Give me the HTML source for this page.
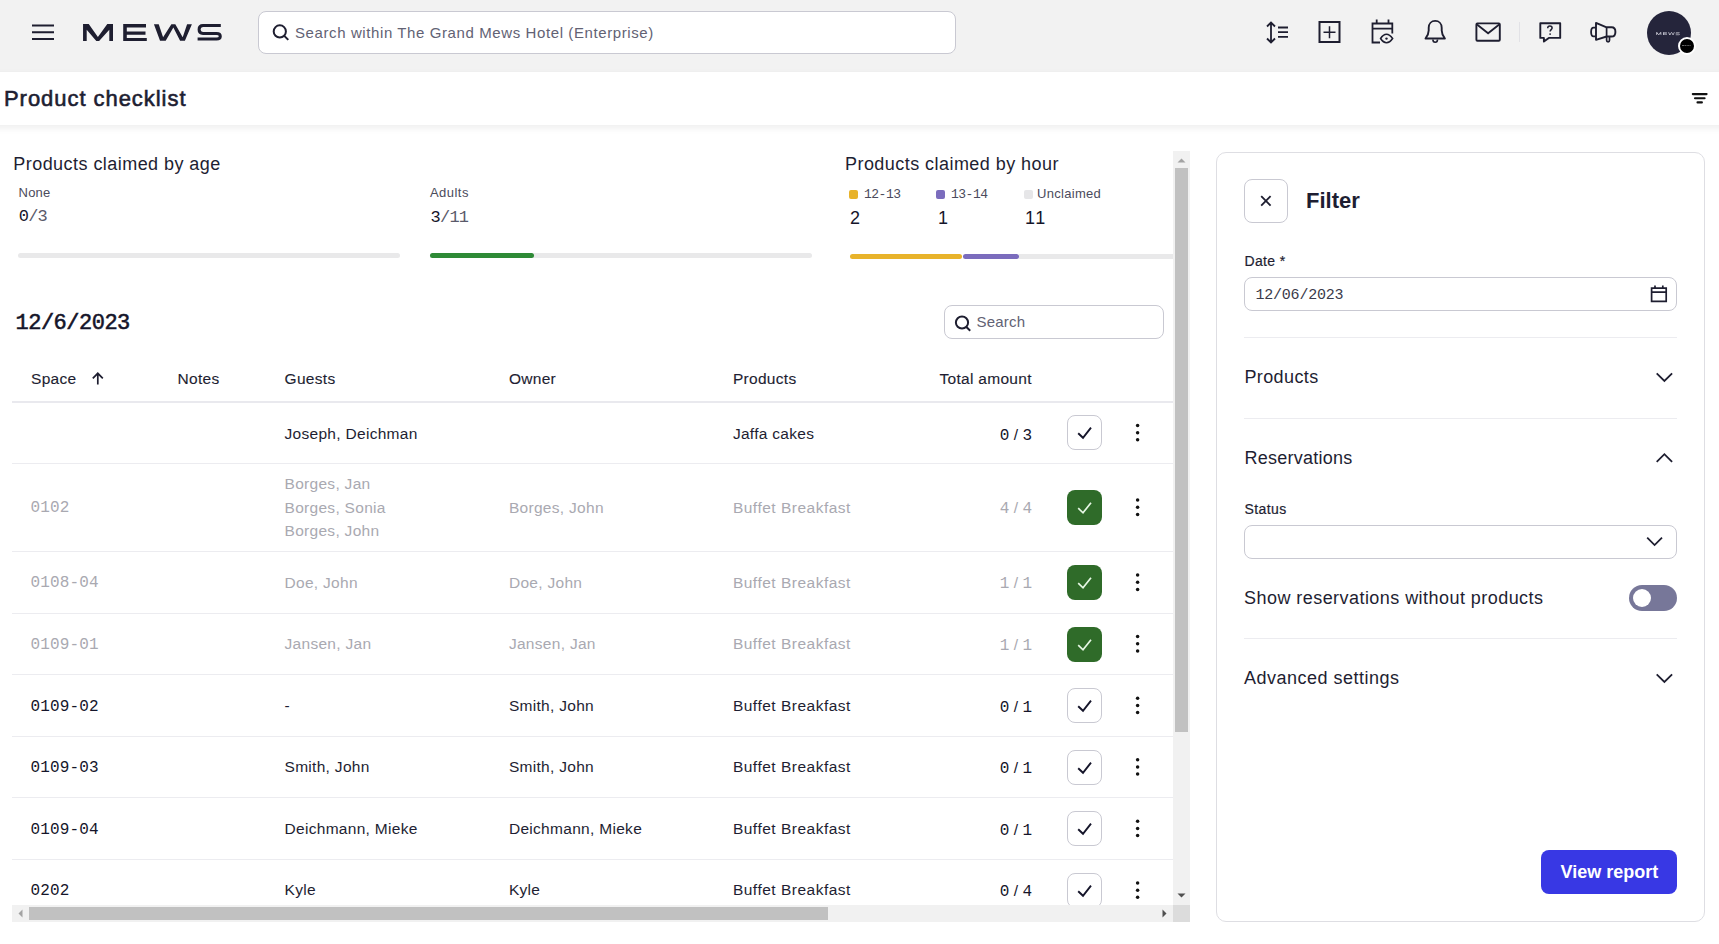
<!DOCTYPE html>
<html><head><meta charset="utf-8"><title>Product checklist</title>
<style>
html,body{margin:0;padding:0;}
body{width:1719px;height:944px;overflow:hidden;position:relative;background:#fff;font-family:"Liberation Sans",sans-serif;}
.t{position:absolute;white-space:nowrap;line-height:1;}
.s{font-family:"Liberation Sans",sans-serif;}
.m{font-family:"Liberation Mono",monospace;}
svg{display:block;}
</style></head><body>
<div style="position:absolute;left:0px;top:0px;width:1719px;height:72px;background:#f2f2f2;"></div>
<svg style="position:absolute;left:28px;top:20px;" width="30" height="24" viewBox="28 20 30 24" fill="none"><path d="M32 25.5H54M32 32.25H54M32 39H54" stroke="#1e1e30" stroke-width="2"/></svg>
<svg style="position:absolute;left:80px;top:20px;" width="146" height="24" viewBox="80 20 146 24" fill="none"><path fill="#1e1e30" d="M83.05 23.9H88.75L97.9 37.1L107.3 23.9H113V41H109.3V29.8L99.1 41H96.3L86.7 29.8V41H83.05Z"/>
<path fill="#1e1e30" d="M123.2 23.9H146V27.5H126.8V31.4H145.5V34.7H126.8V37.9H146.8V41H123.2Z"/>
<path fill="#1e1e30" d="M153.93 24.14H158.73L163.1 37.2L171.38 24.14H175.31L182.7 37.2L187.09 24.14H191.89L184.9 40.72H180.1L173.34 27.4L165.71 40.72H160.03Z"/>
<path stroke="#1e1e30" stroke-width="3" d="M220.8 25.6H203C199.6 25.6 199.1 28 199.1 29.6C199.1 31.5 200 33.5 203 33.5H216.5C219.6 33.5 220.3 35 220.3 36.3C220.3 37.8 219.6 39.1 216.5 39.1H197.6"/></svg>
<div style="position:absolute;left:258px;top:11px;width:698px;height:43px;box-sizing:border-box;border:1px solid #c9c9d2;border-radius:8px;background:#fff;"></div>
<svg style="position:absolute;left:270px;top:22px;" width="22" height="22" viewBox="270 22 22 22" fill="none"><circle cx="279.8" cy="31.4" r="6.1" stroke="#1e1e30" stroke-width="2"/><path d="M284.3 35.9L288.3 39.9" stroke="#1e1e30" stroke-width="2"/></svg>
<div class="t s" style="left:295px;top:25.20px;font-size:15px;font-weight:400;color:#626274;letter-spacing:0.6px;">Search within The Grand Mews Hotel (Enterprise)</div>
<svg style="position:absolute;left:1260px;top:16px;" width="32" height="32" viewBox="1260 16 32 32" fill="none"><path d="M1271 22.5V42.5M1267 26.5L1271 22.5L1275 26.5M1267 38.5L1271 42.5L1275 38.5M1278 27.5H1288M1278 32.2H1288M1278 36.9H1288" stroke="#1e1e30" stroke-width="1.8"/></svg>
<svg style="position:absolute;left:1314px;top:16px;" width="32" height="32" viewBox="1314 16 32 32" fill="none"><rect x="1319.5" y="22" width="20" height="20" stroke="#1e1e30" stroke-width="2"/><path d="M1323.5 32.2H1335.5M1329.5 26.2V38.2" stroke="#1e1e30" stroke-width="1.5"/></svg>
<svg style="position:absolute;left:1366px;top:16px;" width="32" height="32" viewBox="1366 16 32 32" fill="none"><path d="M1380 42.5H1372.5V23.5H1392.3V33.5M1372.5 28.7H1392.3M1376.7 19.5V23.5M1388.5 19.5V23.5" stroke="#1e1e30" stroke-width="1.8"/><path d="M1380.6 38.5C1382.5 35.5 1384.5 34.3 1386.5 34.3C1388.5 34.3 1390.5 35.5 1392.6 38.5C1390.5 41.5 1388.5 42.7 1386.5 42.7C1384.5 42.7 1382.5 41.5 1380.6 38.5Z" stroke="#1e1e30" stroke-width="1.6"/><circle cx="1386.5" cy="38.6" r="1.2" fill="#1e1e30"/></svg>
<svg style="position:absolute;left:1418px;top:16px;" width="32" height="32" viewBox="1418 16 32 32" fill="none"><path d="M1425.5 38.5C1427.8 35.5 1428.7 33.6 1428.7 30.5V27.8C1428.7 23.7 1431.5 20.9 1435.2 20.9C1438.9 20.9 1441.7 23.7 1441.7 27.8V30.5C1441.7 33.6 1442.6 35.5 1444.9 38.5Z" stroke="#1e1e30" stroke-width="1.9" stroke-linejoin="round"/><path d="M1432.9 39.5C1432.9 41.2 1433.9 42.2 1435.2 42.2C1436.5 42.2 1437.5 41.2 1437.5 39.5" stroke="#1e1e30" stroke-width="1.6"/></svg>
<svg style="position:absolute;left:1470px;top:16px;" width="36" height="32" viewBox="1470 16 36 32" fill="none"><rect x="1476.4" y="23.4" width="23.4" height="17.3" rx="1" stroke="#1e1e30" stroke-width="1.9"/><path d="M1477 24.5L1488.1 33.3L1499.2 24.5" stroke="#1e1e30" stroke-width="1.8"/></svg>
<div style="position:absolute;left:1519px;top:22px;width:1px;height:20px;background:#e2e2e6;"></div>
<svg style="position:absolute;left:1534px;top:16px;" width="32" height="32" viewBox="1534 16 32 32" fill="none"><path d="M1540.3 23.3H1560.2V37.9H1548.8L1543.9 41.6V37.9H1540.3Z" stroke="#1e1e30" stroke-width="1.9" stroke-linejoin="round"/><path d="M1547.7 28.3C1547.7 26.9 1548.7 26.1 1549.9 26.1C1551.2 26.1 1552.1 26.9 1552.1 28.1C1552.1 29.6 1550.1 29.8 1550.1 31.6" stroke="#1e1e30" stroke-width="1.5"/><circle cx="1550.1" cy="34.1" r="0.9" fill="#1e1e30"/></svg>
<svg style="position:absolute;left:1586px;top:16px;" width="36" height="32" viewBox="1586 16 36 32" fill="none"><path d="M1596 22.9L1606.6 27.3H1611.6C1614 27.3 1615.4 29.4 1615.4 31.9C1615.4 34.4 1614 36.5 1611.6 36.5H1606.6L1596 39.8Z" stroke="#1e1e30" stroke-width="1.9" stroke-linejoin="round"/><path d="M1596 27.6H1593.6C1591.8 27.6 1591.1 29.8 1591.1 31.9C1591.1 34 1591.8 36.3 1593.6 36.3H1596" stroke="#1e1e30" stroke-width="1.8"/><path d="M1606.6 28V40.3C1606.6 41.3 1607.3 41.8 1608.1 41.8C1608.9 41.8 1609.5 41.3 1609.5 40.3V36.5" stroke="#1e1e30" stroke-width="1.7"/></svg>
<div style="position:absolute;left:1647px;top:11px;width:44px;height:44px;border-radius:50%;background:#25253b;"></div>
<svg style="position:absolute;left:1656px;top:32.4px" width="24" height="3.3" viewBox="82 23 141 19" preserveAspectRatio="none"><g fill="#dcdce6"><path d="M83.05 23.9H88.75L97.9 37.1L107.3 23.9H113V41H109.3V29.8L99.1 41H96.3L86.7 29.8V41H83.05Z"/><path d="M123.2 23.9H146V27.5H126.8V31.4H145.5V34.7H126.8V37.9H146.8V41H123.2Z"/><path d="M153.93 24.14H158.73L163.1 37.2L171.38 24.14H175.31L182.7 37.2L187.09 24.14H191.89L184.9 40.72H180.1L173.34 27.4L165.71 40.72H160.03Z"/><path fill="none" stroke="#e8e8f0" stroke-width="3" d="M220.8 25.6H203C199.6 25.6 199.1 28 199.1 29.6C199.1 31.5 200 33.5 203 33.5H216.5C219.6 33.5 220.3 35 220.3 36.3C220.3 37.8 219.6 39.1 216.5 39.1H197.6"/></g></svg>
<div style="position:absolute;left:1677.5px;top:37px;width:18px;height:18px;border-radius:50%;background:#000;box-sizing:border-box;border:2px solid #fff;"></div>
<svg style="position:absolute;left:1682px;top:45px" width="9" height="1.3" viewBox="82 23 141 19" preserveAspectRatio="none"><g fill="#bbbbbb"><path d="M83.05 23.9H88.75L97.9 37.1L107.3 23.9H113V41H109.3V29.8L99.1 41H96.3L86.7 29.8V41H83.05Z"/><path d="M123.2 23.9H146V27.5H126.8V31.4H145.5V34.7H126.8V37.9H146.8V41H123.2Z"/><path d="M153.93 24.14H158.73L163.1 37.2L171.38 24.14H175.31L182.7 37.2L187.09 24.14H191.89L184.9 40.72H180.1L173.34 27.4L165.71 40.72H160.03Z"/><path fill="none" stroke="#e8e8f0" stroke-width="3" d="M220.8 25.6H203C199.6 25.6 199.1 28 199.1 29.6C199.1 31.5 200 33.5 203 33.5H216.5C219.6 33.5 220.3 35 220.3 36.3C220.3 37.8 219.6 39.1 216.5 39.1H197.6"/></g></svg>
<div style="position:absolute;left:-20px;top:72px;width:1759px;height:53px;background:#fff;box-shadow:0 3px 7px rgba(0,0,0,0.07);"></div>
<div class="t s" style="left:4px;top:87.88px;font-size:22px;font-weight:400;color:#1e1e32;letter-spacing:0.95px;-webkit-text-stroke:0.6px #1e1e32;">Product checklist</div>
<svg style="position:absolute;left:1686px;top:86px;" width="28" height="24" viewBox="1686 86 28 24" fill="none"><path d="M1692.8 94.1H1706.6M1695 98.2H1704.6M1697.5 102.4H1701.9" stroke="#111" stroke-width="2.1" stroke-linecap="round"/></svg>
<div class="t s" style="left:13.3px;top:154.86px;font-size:18px;font-weight:400;color:#1e1e32;letter-spacing:0.45px;">Products claimed by age</div>
<div class="t s" style="left:18.6px;top:186.00px;font-size:13px;font-weight:400;color:#4b4b5c;letter-spacing:0.15px;">None</div>
<div class="t m" style="left:18.8px;top:208.48px;font-size:17px;font-weight:400;color:#15152a;letter-spacing:-0.8px;">0<span style="color:#5a5a6a">/3</span></div>
<div style="position:absolute;left:18px;top:253.3px;width:382px;height:4.7px;background:#e9e9ea;border-radius:3px;"></div>
<div class="t s" style="left:430px;top:185.80px;font-size:13px;font-weight:400;color:#4b4b5c;letter-spacing:0.45px;">Adults</div>
<div class="t m" style="left:430.6px;top:208.88px;font-size:17px;font-weight:400;color:#15152a;letter-spacing:-0.8px;">3<span style="color:#5a5a6a">/11</span></div>
<div style="position:absolute;left:430px;top:253.3px;width:382px;height:4.7px;background:#e9e9ea;border-radius:3px;"></div>
<div style="position:absolute;left:430px;top:253px;width:104px;height:5.3px;background:#2e8a36;border-radius:3px;"></div>
<div class="t s" style="left:845px;top:154.86px;font-size:18px;font-weight:400;color:#1e1e32;letter-spacing:0.45px;">Products claimed by hour</div>
<div style="position:absolute;left:849px;top:190.4px;width:9px;height:8.6px;background:#e8b32b;border-radius:2px;"></div>
<div class="t m" style="left:864px;top:188.04px;font-size:13px;font-weight:400;color:#4b4b5c;letter-spacing:-0.5px;">12-13</div>
<div style="position:absolute;left:936px;top:190.4px;width:9px;height:8.6px;background:#7b6cbd;border-radius:2px;"></div>
<div class="t m" style="left:951px;top:188.04px;font-size:13px;font-weight:400;color:#4b4b5c;letter-spacing:-0.5px;">13-14</div>
<div style="position:absolute;left:1024px;top:190.4px;width:8.5px;height:8.6px;background:#e6e6e8;border-radius:2px;"></div>
<div class="t s" style="left:1037px;top:187.00px;font-size:13px;font-weight:400;color:#4b4b5c;letter-spacing:0.3px;">Unclaimed</div>
<div class="t s" style="left:850px;top:208.66px;font-size:18px;font-weight:400;color:#15152a;letter-spacing:0px;">2</div>
<div class="t s" style="left:938px;top:208.66px;font-size:18px;font-weight:400;color:#15152a;letter-spacing:0px;">1</div>
<div class="t s" style="left:1025px;top:208.66px;font-size:18px;font-weight:400;color:#15152a;letter-spacing:1.5px;">11</div>
<div style="position:absolute;left:1019px;top:254.3px;width:154px;height:4.9px;background:#e9e9ea;"></div>
<div style="position:absolute;left:963px;top:254.2px;width:56px;height:5px;background:#7b6cbd;border-radius:3px;"></div>
<div style="position:absolute;left:850px;top:254.2px;width:112px;height:5px;background:#e8b32b;border-radius:3px;"></div>
<div class="t m" style="left:15.5px;top:313.35px;font-size:22px;font-weight:400;color:#15152a;letter-spacing:-0.5px;-webkit-text-stroke:0.55px #15152a;">12/6/2023</div>
<div style="position:absolute;left:944px;top:305px;width:220px;height:34px;box-sizing:border-box;border:1px solid #c9c9d2;border-radius:8px;background:#fff;"></div>
<svg style="position:absolute;left:950px;top:310px;" width="26" height="26" viewBox="950 310 26 26" fill="none"><circle cx="962" cy="322.5" r="6.1" stroke="#1e1e30" stroke-width="2"/><path d="M966.4 327L970.2 330.8" stroke="#1e1e30" stroke-width="2"/></svg>
<div class="t s" style="left:976.5px;top:314.30px;font-size:15px;font-weight:400;color:#626274;letter-spacing:0.2px;">Search</div>
<div class="t s" style="left:31px;top:370.88px;font-size:15.5px;font-weight:400;color:#1e1e32;letter-spacing:0.3px;-webkit-text-stroke:0.12px #1e1e32;">Space</div>
<svg style="position:absolute;left:88px;top:368px;" width="20" height="20" viewBox="88 368 20 20" fill="none"><path d="M97.8 384.5V373.5M92.8 378.3L97.8 373.3L102.8 378.3" stroke="#1e1e30" stroke-width="1.7"/></svg>
<div class="t s" style="left:177.6px;top:370.88px;font-size:15.5px;font-weight:400;color:#1e1e32;letter-spacing:0.3px;-webkit-text-stroke:0.12px #1e1e32;">Notes</div>
<div class="t s" style="left:284.6px;top:370.88px;font-size:15.5px;font-weight:400;color:#1e1e32;letter-spacing:0.3px;-webkit-text-stroke:0.12px #1e1e32;">Guests</div>
<div class="t s" style="left:508.9px;top:370.88px;font-size:15.5px;font-weight:400;color:#1e1e32;letter-spacing:0.3px;-webkit-text-stroke:0.12px #1e1e32;">Owner</div>
<div class="t s" style="left:732.9px;top:370.88px;font-size:15.5px;font-weight:400;color:#1e1e32;letter-spacing:0.3px;-webkit-text-stroke:0.12px #1e1e32;">Products</div>
<div class="t s" style="right:687.2px;top:370.88px;font-size:15.5px;font-weight:400;color:#1e1e32;letter-spacing:0.3px;-webkit-text-stroke:0.12px #1e1e32;">Total amount</div>
<div style="position:absolute;left:12px;top:401px;width:1161px;height:2px;background:#e9e9ee;"></div>
<div style="position:absolute;left:12px;top:462.8px;width:1161px;height:1px;background:#ececf0;"></div>
<div style="position:absolute;left:12px;top:550.7px;width:1161px;height:1px;background:#ececf0;"></div>
<div style="position:absolute;left:12px;top:612.7px;width:1161px;height:1px;background:#ececf0;"></div>
<div style="position:absolute;left:12px;top:673.9px;width:1161px;height:1px;background:#ececf0;"></div>
<div style="position:absolute;left:12px;top:735.9px;width:1161px;height:1px;background:#ececf0;"></div>
<div style="position:absolute;left:12px;top:796.9px;width:1161px;height:1px;background:#ececf0;"></div>
<div style="position:absolute;left:12px;top:858.9px;width:1161px;height:1px;background:#ececf0;"></div>
<div class="t s" style="left:284.5px;top:425.78px;font-size:15.5px;font-weight:400;color:#1e1e32;letter-spacing:0.3px;">Joseph, Deichman</div>
<div class="t s" style="left:732.9px;top:425.78px;font-size:15.5px;font-weight:400;color:#1e1e32;letter-spacing:0.3px;">Jaffa cakes</div>
<div class="t m" style="right:687px;top:426.64px;font-size:16px;font-weight:400;color:#15152a;letter-spacing:0px;">0<span class="s" style="font-size:15.5px">&nbsp;/&nbsp;</span>3</div>
<div style="position:absolute;left:1067px;top:415.45px;width:35px;height:35px;box-sizing:border-box;border:1px solid #c9c9d2;border-radius:8px;background:#fff;"></div>
<svg style="position:absolute;left:1067px;top:415.45px;" width="35" height="35" viewBox="1067 415.45 35 35" fill="none"><path d="M1078.2 433.65L1083 438.25L1091 428.15" stroke="#15152a" stroke-width="1.9"/></svg>
<svg style="position:absolute;left:1130px;top:420px;" width="16" height="24" viewBox="1130 420 16 24" fill="none"><circle cx="1137.6" cy="425.45" r="1.75" fill="#111"/><circle cx="1137.6" cy="432.65" r="1.75" fill="#111"/><circle cx="1137.6" cy="439.85" r="1.75" fill="#111"/></svg>
<div class="t m" style="left:30.5px;top:500.49px;font-size:16px;font-weight:400;color:#a9a9b1;letter-spacing:0.15px;">0102</div>
<div class="t s" style="left:284.5px;top:476.33px;font-size:15.5px;font-weight:400;color:#a9a9b1;letter-spacing:0.3px;">Borges, Jan</div>
<div class="t s" style="left:284.5px;top:499.63px;font-size:15.5px;font-weight:400;color:#a9a9b1;letter-spacing:0.3px;">Borges, Sonia</div>
<div class="t s" style="left:284.5px;top:522.93px;font-size:15.5px;font-weight:400;color:#a9a9b1;letter-spacing:0.3px;">Borges, John</div>
<div class="t s" style="left:508.9px;top:499.63px;font-size:15.5px;font-weight:400;color:#a9a9b1;letter-spacing:0.3px;">Borges, John</div>
<div class="t s" style="left:732.9px;top:499.63px;font-size:15.5px;font-weight:400;color:#a9a9b1;letter-spacing:0.5px;">Buffet Breakfast</div>
<div class="t m" style="right:687px;top:500.49px;font-size:16px;font-weight:400;color:#a9a9b1;letter-spacing:0px;">4<span class="s" style="font-size:15.5px">&nbsp;/&nbsp;</span>4</div>
<div style="position:absolute;left:1067px;top:490.05px;width:35px;height:35px;background:#2f6b29;border-radius:8px;"></div>
<svg style="position:absolute;left:1067px;top:490.05px;" width="35" height="35" viewBox="1067 490.05 35 35" fill="none"><path d="M1078.2 508.25L1083 512.85L1091 502.75" stroke="#e6f7e4" stroke-width="1.7"/></svg>
<svg style="position:absolute;left:1130px;top:495px;" width="16" height="24" viewBox="1130 495 16 24" fill="none"><circle cx="1137.6" cy="500.05" r="1.75" fill="#111"/><circle cx="1137.6" cy="507.25" r="1.75" fill="#111"/><circle cx="1137.6" cy="514.45" r="1.75" fill="#111"/></svg>
<div class="t m" style="left:30.5px;top:575.44px;font-size:16px;font-weight:400;color:#a9a9b1;letter-spacing:0.15px;">0108-04</div>
<div class="t s" style="left:284.5px;top:574.58px;font-size:15.5px;font-weight:400;color:#a9a9b1;letter-spacing:0.3px;">Doe, John</div>
<div class="t s" style="left:508.9px;top:574.58px;font-size:15.5px;font-weight:400;color:#a9a9b1;letter-spacing:0.3px;">Doe, John</div>
<div class="t s" style="left:732.9px;top:574.58px;font-size:15.5px;font-weight:400;color:#a9a9b1;letter-spacing:0.5px;">Buffet Breakfast</div>
<div class="t m" style="right:687px;top:575.44px;font-size:16px;font-weight:400;color:#a9a9b1;letter-spacing:0px;">1<span class="s" style="font-size:15.5px">&nbsp;/&nbsp;</span>1</div>
<div style="position:absolute;left:1067px;top:565.0px;width:35px;height:35px;background:#2f6b29;border-radius:8px;"></div>
<svg style="position:absolute;left:1067px;top:565.0px;" width="35" height="35" viewBox="1067 565.0 35 35" fill="none"><path d="M1078.2 583.2L1083 587.8L1091 577.7" stroke="#e6f7e4" stroke-width="1.7"/></svg>
<svg style="position:absolute;left:1130px;top:570px;" width="16" height="24" viewBox="1130 570 16 24" fill="none"><circle cx="1137.6" cy="575.00" r="1.75" fill="#111"/><circle cx="1137.6" cy="582.20" r="1.75" fill="#111"/><circle cx="1137.6" cy="589.40" r="1.75" fill="#111"/></svg>
<div class="t m" style="left:30.5px;top:637.04px;font-size:16px;font-weight:400;color:#a9a9b1;letter-spacing:0.15px;">0109-01</div>
<div class="t s" style="left:284.5px;top:636.18px;font-size:15.5px;font-weight:400;color:#a9a9b1;letter-spacing:0.3px;">Jansen, Jan</div>
<div class="t s" style="left:508.9px;top:636.18px;font-size:15.5px;font-weight:400;color:#a9a9b1;letter-spacing:0.3px;">Jansen, Jan</div>
<div class="t s" style="left:732.9px;top:636.18px;font-size:15.5px;font-weight:400;color:#a9a9b1;letter-spacing:0.5px;">Buffet Breakfast</div>
<div class="t m" style="right:687px;top:637.04px;font-size:16px;font-weight:400;color:#a9a9b1;letter-spacing:0px;">1<span class="s" style="font-size:15.5px">&nbsp;/&nbsp;</span>1</div>
<div style="position:absolute;left:1067px;top:626.5999999999999px;width:35px;height:35px;background:#2f6b29;border-radius:8px;"></div>
<svg style="position:absolute;left:1067px;top:626.5999999999999px;" width="35" height="35" viewBox="1067 626.5999999999999 35 35" fill="none"><path d="M1078.2 644.8L1083 649.3999999999999L1091 639.3" stroke="#e6f7e4" stroke-width="1.7"/></svg>
<svg style="position:absolute;left:1130px;top:631px;" width="16" height="24" viewBox="1130 631 16 24" fill="none"><circle cx="1137.6" cy="636.60" r="1.75" fill="#111"/><circle cx="1137.6" cy="643.80" r="1.75" fill="#111"/><circle cx="1137.6" cy="651.00" r="1.75" fill="#111"/></svg>
<div class="t m" style="left:30.5px;top:698.64px;font-size:16px;font-weight:400;color:#15152a;letter-spacing:0.15px;">0109-02</div>
<div class="t s" style="left:284.5px;top:697.78px;font-size:15.5px;font-weight:400;color:#1e1e32;letter-spacing:0.3px;">-</div>
<div class="t s" style="left:508.9px;top:697.78px;font-size:15.5px;font-weight:400;color:#1e1e32;letter-spacing:0.3px;">Smith, John</div>
<div class="t s" style="left:732.9px;top:697.78px;font-size:15.5px;font-weight:400;color:#1e1e32;letter-spacing:0.5px;">Buffet Breakfast</div>
<div class="t m" style="right:687px;top:698.64px;font-size:16px;font-weight:400;color:#15152a;letter-spacing:0px;">0<span class="s" style="font-size:15.5px">&nbsp;/&nbsp;</span>1</div>
<div style="position:absolute;left:1067px;top:688.1999999999999px;width:35px;height:35px;box-sizing:border-box;border:1px solid #c9c9d2;border-radius:8px;background:#fff;"></div>
<svg style="position:absolute;left:1067px;top:688.1999999999999px;" width="35" height="35" viewBox="1067 688.1999999999999 35 35" fill="none"><path d="M1078.2 706.4L1083 710.9999999999999L1091 700.9" stroke="#15152a" stroke-width="1.9"/></svg>
<svg style="position:absolute;left:1130px;top:693px;" width="16" height="24" viewBox="1130 693 16 24" fill="none"><circle cx="1137.6" cy="698.20" r="1.75" fill="#111"/><circle cx="1137.6" cy="705.40" r="1.75" fill="#111"/><circle cx="1137.6" cy="712.60" r="1.75" fill="#111"/></svg>
<div class="t m" style="left:30.5px;top:760.14px;font-size:16px;font-weight:400;color:#15152a;letter-spacing:0.15px;">0109-03</div>
<div class="t s" style="left:284.5px;top:759.28px;font-size:15.5px;font-weight:400;color:#1e1e32;letter-spacing:0.3px;">Smith, John</div>
<div class="t s" style="left:508.9px;top:759.28px;font-size:15.5px;font-weight:400;color:#1e1e32;letter-spacing:0.3px;">Smith, John</div>
<div class="t s" style="left:732.9px;top:759.28px;font-size:15.5px;font-weight:400;color:#1e1e32;letter-spacing:0.5px;">Buffet Breakfast</div>
<div class="t m" style="right:687px;top:760.14px;font-size:16px;font-weight:400;color:#15152a;letter-spacing:0px;">0<span class="s" style="font-size:15.5px">&nbsp;/&nbsp;</span>1</div>
<div style="position:absolute;left:1067px;top:749.6999999999999px;width:35px;height:35px;box-sizing:border-box;border:1px solid #c9c9d2;border-radius:8px;background:#fff;"></div>
<svg style="position:absolute;left:1067px;top:749.6999999999999px;" width="35" height="35" viewBox="1067 749.6999999999999 35 35" fill="none"><path d="M1078.2 767.9L1083 772.4999999999999L1091 762.4" stroke="#15152a" stroke-width="1.9"/></svg>
<svg style="position:absolute;left:1130px;top:754px;" width="16" height="24" viewBox="1130 754 16 24" fill="none"><circle cx="1137.6" cy="759.70" r="1.75" fill="#111"/><circle cx="1137.6" cy="766.90" r="1.75" fill="#111"/><circle cx="1137.6" cy="774.10" r="1.75" fill="#111"/></svg>
<div class="t m" style="left:30.5px;top:821.64px;font-size:16px;font-weight:400;color:#15152a;letter-spacing:0.15px;">0109-04</div>
<div class="t s" style="left:284.5px;top:820.78px;font-size:15.5px;font-weight:400;color:#1e1e32;letter-spacing:0.3px;">Deichmann, Mieke</div>
<div class="t s" style="left:508.9px;top:820.78px;font-size:15.5px;font-weight:400;color:#1e1e32;letter-spacing:0.3px;">Deichmann, Mieke</div>
<div class="t s" style="left:732.9px;top:820.78px;font-size:15.5px;font-weight:400;color:#1e1e32;letter-spacing:0.5px;">Buffet Breakfast</div>
<div class="t m" style="right:687px;top:821.64px;font-size:16px;font-weight:400;color:#15152a;letter-spacing:0px;">0<span class="s" style="font-size:15.5px">&nbsp;/&nbsp;</span>1</div>
<div style="position:absolute;left:1067px;top:811.1999999999999px;width:35px;height:35px;box-sizing:border-box;border:1px solid #c9c9d2;border-radius:8px;background:#fff;"></div>
<svg style="position:absolute;left:1067px;top:811.1999999999999px;" width="35" height="35" viewBox="1067 811.1999999999999 35 35" fill="none"><path d="M1078.2 829.4L1083 833.9999999999999L1091 823.9" stroke="#15152a" stroke-width="1.9"/></svg>
<svg style="position:absolute;left:1130px;top:816px;" width="16" height="24" viewBox="1130 816 16 24" fill="none"><circle cx="1137.6" cy="821.20" r="1.75" fill="#111"/><circle cx="1137.6" cy="828.40" r="1.75" fill="#111"/><circle cx="1137.6" cy="835.60" r="1.75" fill="#111"/></svg>
<div class="t m" style="left:30.5px;top:882.74px;font-size:16px;font-weight:400;color:#15152a;letter-spacing:0.15px;">0202</div>
<div class="t s" style="left:284.5px;top:881.88px;font-size:15.5px;font-weight:400;color:#1e1e32;letter-spacing:0.3px;">Kyle</div>
<div class="t s" style="left:508.9px;top:881.88px;font-size:15.5px;font-weight:400;color:#1e1e32;letter-spacing:0.3px;">Kyle</div>
<div class="t s" style="left:732.9px;top:881.88px;font-size:15.5px;font-weight:400;color:#1e1e32;letter-spacing:0.5px;">Buffet Breakfast</div>
<div class="t m" style="right:687px;top:882.74px;font-size:16px;font-weight:400;color:#15152a;letter-spacing:0px;">0<span class="s" style="font-size:15.5px">&nbsp;/&nbsp;</span>4</div>
<div style="position:absolute;left:1067px;top:872.9499999999999px;width:35px;height:35px;box-sizing:border-box;border:1px solid #c9c9d2;border-radius:8px;background:#fff;"></div>
<svg style="position:absolute;left:1067px;top:872.9499999999999px;" width="35" height="35" viewBox="1067 872.9499999999999 35 35" fill="none"><path d="M1078.2 891.15L1083 895.7499999999999L1091 885.65" stroke="#15152a" stroke-width="1.9"/></svg>
<svg style="position:absolute;left:1130px;top:878px;" width="16" height="24" viewBox="1130 878 16 24" fill="none"><circle cx="1137.6" cy="882.95" r="1.75" fill="#111"/><circle cx="1137.6" cy="890.15" r="1.75" fill="#111"/><circle cx="1137.6" cy="897.35" r="1.75" fill="#111"/></svg>
<div style="position:absolute;left:1173px;top:151px;width:17px;height:754px;background:#f1f1f1;"></div>
<div style="position:absolute;left:1175px;top:168px;width:13px;height:564px;background:#c1c1c1;"></div>
<svg style="position:absolute;left:1173px;top:151px;" width="17" height="17" viewBox="1173 151 17 17" fill="none"><path d="M1177.5 162.5L1181.5 158.5L1185.5 162.5Z" fill="#a3a3a3"/></svg>
<svg style="position:absolute;left:1173px;top:888px;" width="17" height="17" viewBox="1173 888 17 17" fill="none"><path d="M1177.5 893.5L1181.5 897.5L1185.5 893.5Z" fill="#505050"/></svg>
<div style="position:absolute;left:12px;top:905px;width:1178px;height:17px;background:#f1f1f1;"></div>
<div style="position:absolute;left:29px;top:907px;width:799px;height:13px;background:#c1c1c1;"></div>
<svg style="position:absolute;left:12px;top:905px;" width="17" height="17" viewBox="12 905 17 17" fill="none"><path d="M22.5 909.5L18.5 913.5L22.5 917.5Z" fill="#a3a3a3"/></svg>
<svg style="position:absolute;left:1156px;top:905px;" width="17" height="17" viewBox="1156 905 17 17" fill="none"><path d="M1162.5 909.5L1166.5 913.5L1162.5 917.5Z" fill="#505050"/></svg>
<div style="position:absolute;left:1173px;top:905px;width:17px;height:17px;background:#dcdcdc;"></div>
<div style="position:absolute;left:1216px;top:151.5px;width:489px;height:770px;box-sizing:border-box;border:1px solid #dedee3;border-radius:10px;background:#fff;"></div>
<div style="position:absolute;left:1244px;top:179px;width:44px;height:44px;box-sizing:border-box;border:1px solid #c9c9d2;border-radius:8px;background:#fff;"></div>
<svg style="position:absolute;left:1255px;top:190px;" width="22" height="22" viewBox="1255 190 22 22" fill="none"><path d="M1261.2 196.2L1270.6 205.6M1270.6 196.2L1261.2 205.6" stroke="#1e1e30" stroke-width="1.8"/></svg>
<div class="t s" style="left:1306px;top:190.48px;font-size:22px;font-weight:700;color:#1e1e32;letter-spacing:0px;">Filter</div>
<div class="t s" style="left:1244.5px;top:253.95px;font-size:14px;font-weight:400;color:#1e1e32;letter-spacing:0.35px;-webkit-text-stroke:0.2px #1e1e32;">Date *</div>
<div style="position:absolute;left:1244px;top:277.3px;width:433px;height:34px;box-sizing:border-box;border:1px solid #c9c9d2;border-radius:8px;background:#fff;"></div>
<div class="t m" style="left:1255.4px;top:288.31px;font-size:15px;font-weight:400;color:#3a3a4a;letter-spacing:-0.2px;">12/06/2023</div>
<svg style="position:absolute;left:1646px;top:282px;" width="26" height="24" viewBox="1646 282 26 24" fill="none"><path d="M1651.6 288.2H1666.2V301.4H1651.6ZM1651.6 292.1H1666.2M1655 285.4V288.2M1662.8 285.4V288.2" stroke="#1e1e30" stroke-width="1.7"/></svg>
<div style="position:absolute;left:1244px;top:337px;width:433px;height:1px;background:#ececf0;"></div>
<div class="t s" style="left:1244.4px;top:367.76px;font-size:18px;font-weight:400;color:#1e1e32;letter-spacing:0.4px;">Products</div>
<svg style="position:absolute;left:1650px;top:366px;" width="28" height="22" viewBox="1650 366 28 22" fill="none"><path d="M1656.7 373.3L1664.4 381L1672.1 373.3" stroke="#1e1e30" stroke-width="1.8"/></svg>
<div style="position:absolute;left:1244px;top:417.5px;width:433px;height:1px;background:#ececf0;"></div>
<div class="t s" style="left:1244.4px;top:448.66px;font-size:18px;font-weight:400;color:#1e1e32;letter-spacing:0.25px;">Reservations</div>
<svg style="position:absolute;left:1650px;top:448px;" width="28" height="22" viewBox="1650 448 28 22" fill="none"><path d="M1656.7 461.9L1664.4 454.2L1672.1 461.9" stroke="#1e1e30" stroke-width="1.8"/></svg>
<div class="t s" style="left:1244.4px;top:501.95px;font-size:14px;font-weight:400;color:#1e1e32;letter-spacing:0.45px;-webkit-text-stroke:0.2px #1e1e32;">Status</div>
<div style="position:absolute;left:1244px;top:525.3px;width:433px;height:33.5px;box-sizing:border-box;border:1px solid #c9c9d2;border-radius:8px;background:#fff;"></div>
<svg style="position:absolute;left:1640px;top:532px;" width="28" height="20" viewBox="1640 532 28 20" fill="none"><path d="M1647.2 537.7L1654.6 545.1L1662 537.7" stroke="#1e1e30" stroke-width="1.8"/></svg>
<div class="t s" style="left:1244px;top:589.16px;font-size:18px;font-weight:400;color:#1e1e32;letter-spacing:0.45px;">Show reservations without products</div>
<div style="position:absolute;left:1629px;top:585px;width:48px;height:25.5px;background:#777799;border-radius:13px;"></div>
<div style="position:absolute;left:1632.8px;top:588.8px;width:18.2px;height:18.2px;background:#fff;border-radius:50%;"></div>
<div style="position:absolute;left:1244px;top:638px;width:433px;height:1px;background:#ececf0;"></div>
<div class="t s" style="left:1244px;top:669.26px;font-size:18px;font-weight:400;color:#1e1e32;letter-spacing:0.5px;">Advanced settings</div>
<svg style="position:absolute;left:1650px;top:666px;" width="28" height="22" viewBox="1650 666 28 22" fill="none"><path d="M1656.7 674.3L1664.4 682L1672.1 674.3" stroke="#1e1e30" stroke-width="1.8"/></svg>
<div style="position:absolute;left:1541px;top:850.3px;width:136px;height:43.5px;background:#3838e4;border-radius:8px;"></div>
<div class="t s" style="left:1560.5px;top:862.76px;font-size:18px;font-weight:700;color:#ffffff;letter-spacing:0px;">View report</div>
</body></html>
